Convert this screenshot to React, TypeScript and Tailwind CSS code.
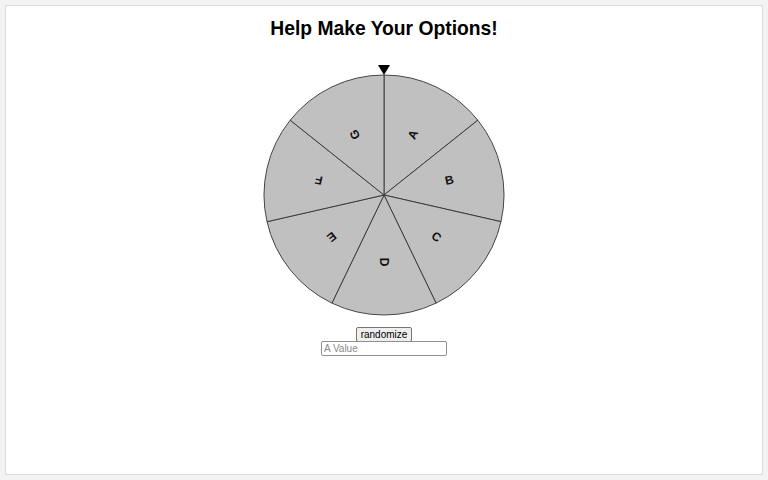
import React from "react";

const labels = ["A", "B", "C", "D", "E", "F", "G"];

function Wheel() {
  const cx = 125;
  const cy = 132;
  const r = 120;
  const n = labels.length;
  const step = (2 * Math.PI) / n;
  const pt = (a: number, rad: number) => [cx + rad * Math.sin(a), cy - rad * Math.cos(a)];
  return (
    <svg width={250} height={254} viewBox="0 0 250 254" className="block">
      {labels.map((l, i) => {
        const a0 = i * step;
        const a1 = (i + 1) * step;
        const [x0, y0] = pt(a0, r);
        const [x1, y1] = pt(a1, r);
        const d = `M ${cx} ${cy} L ${x0} ${y0} A ${r} ${r} 0 0 1 ${x1} ${y1} Z`;
        return <path key={l} d={d} fill="#c0c0c0" stroke="#333" strokeWidth={0.9} />;
      })}
      {labels.map((l, i) => {
        const a = (i + 0.5) * step;
        const [x, y] = pt(a, 67);
        const deg = (a * 180) / Math.PI - 90;
        return (
          <text
            key={l}
            x={x}
            y={y}
            transform={`rotate(${deg} ${x} ${y})`}
            textAnchor="middle"
            dominantBaseline="central"
            fontFamily="'Liberation Sans', Arial, sans-serif"
            fontWeight="bold"
            fontSize={12}
            fill="#111"
          >
            {l}
          </text>
        );
      })}
      <path d={`M ${cx - 6} 2 L ${cx + 6} 2 L ${cx} 12 Z`} fill="#000" />
    </svg>
  );
}

export default function App() {
  return (
    <div className="h-[480px] w-[768px] bg-[#f3f3f3] p-[5px]" style={{ fontFamily: "'Liberation Sans', Arial, sans-serif" }}>
      <div className="flex h-full flex-col items-center border border-[#dcdcdc] bg-white">
        <h1 className="mt-[11px] text-[19.3px] font-bold leading-[24px] text-black">Help Make Your Options!</h1>
        <div className="mt-[22px]">
          <Wheel />
        </div>
        <button className="mt-[10px] h-[15px] rounded-[2px] border border-[#767676] bg-[#efefef] px-[4px] text-[10px] leading-[12px] text-black">
          randomize
        </button>
        <input
          placeholder="A Value"
          className="-mt-px h-[15px] w-[126px] rounded-[2px] border border-[#8f8f8f] bg-white px-[2px] text-[10px] leading-[12px] text-black placeholder:text-[#8a8a8a] outline-none"
        />
      </div>
    </div>
  );
}
